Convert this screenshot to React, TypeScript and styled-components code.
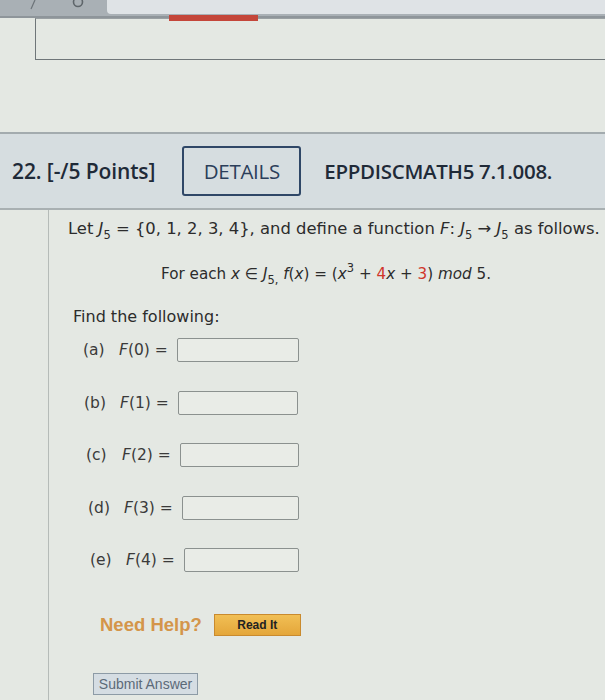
import styled, { createGlobalStyle } from "styled-components";

const GlobalStyle = createGlobalStyle`
  html, body {
    margin: 0;
    padding: 0;
    background: #e4e8e3;
  }
  * {
    box-sizing: border-box;
  }
`;

const Page = styled.div`
  width: 605px;
  height: 700px;
  overflow: hidden;
  background: #e4e8e3;
  font-family: "DejaVu Sans", Verdana, sans-serif;
  color: #333;
`;

const TopBar = styled.div`
  height: 18px;
  background: #a9b0b5;
  border-bottom: 2px solid #8e959a;
  display: flex;
  align-items: flex-start;
`;

const BarIcons = styled.div`
  width: 107px;
  display: flex;
  gap: 34px;
  padding: 0 0 0 28px;
`;

const TabArea = styled.div`
  flex: 1;
  height: 14px;
  background: #dfe3e6;
  border-bottom-left-radius: 4px;
`;

const PrevAnswer = styled.div`
  position: relative;
  margin: 0 0 0 35px;
  height: 42px;
  border-left: 1.5px solid #6f7679;
  border-bottom: 1.5px solid #6f7679;
  border-top: 1.5px solid #9aa0a3;
`;

const RedMark = styled.div`
  position: absolute;
  top: -4px;
  left: 133px;
  width: 89px;
  height: 6px;
  background: #c4463a;
`;

const Spacer = styled.div`
  height: 72px;
`;

const QuestionHeader = styled.div`
  height: 78px;
  background: #d6dde0;
  border-top: 2px solid #a3abae;
  border-bottom: 2px solid #a9b0b2;
  display: flex;
  align-items: center;
  padding: 0 0 0 12px;
  font-family: "Open Sans", "Noto Sans", sans-serif;
  color: #1f2a38;
`;

const Points = styled.span`
  font-size: 21px;
  font-weight: 600;
  letter-spacing: -0.1px;
`;

const DetailsButton = styled.div`
  margin-left: 27px;
  width: 119px;
  height: 50px;
  border: 2px solid #2f4767;
  border-radius: 3px;
  display: flex;
  align-items: center;
  justify-content: center;
  font-size: 20.5px;
  color: #2b3e5a;
  letter-spacing: -0.3px;
`;

const Source = styled.span`
  margin-left: 23px;
  font-size: 20.5px;
  font-weight: 600;
  letter-spacing: -0.3px;
`;

const Body = styled.div`
  margin-left: 48px;
  border-left: 1.5px solid #b5bbb8;
  padding: 8px 0 0 19px;
  height: 500px;
`;

const Statement = styled.div`
  font-size: 16.4px;
  color: #2c2c2c;
  white-space: nowrap;
  line-height: 22px;
`;

const Formula = styled(Statement)`
  margin: 22px 0 0 93px;
  font-size: 15.2px;
`;

const Var = styled.i`
  font-family: "DejaVu Sans", Verdana, sans-serif;
`;

const Small = styled.span<{ $up?: boolean }>`
  font-size: 11.5px;
  position: relative;
  top: ${(p) => (p.$up ? "-7px" : "5px")};
`;

const Red = styled.span`
  color: #d0352b;
`;

const Find = styled.div`
  margin: 21px 0 0 5px;
  font-size: 16px;
  color: #2c2c2c;
`;

const Parts = styled.div`
  display: flex;
  flex-direction: column;
  gap: 28.5px;
  margin: 12px 0 0 15px;
`;

const PartRow = styled.div<{ $shift: number }>`
  display: flex;
  align-items: center;
  padding-left: ${(p) => p.$shift}px;
  font-size: 15.5px;
  color: #3a3a3a;
  height: 24px;
`;

const PartLabel = styled.span`
  width: 36px;
`;

const PartExpr = styled.span`
  width: 58px;
  white-space: nowrap;
`;

const AnswerInput = styled.div<{ $width: number }>`
  width: ${(p) => p.$width}px;
  height: 24px;
  border: 1.5px solid #8b918f;
  border-radius: 2px;
  background: #e9ece7;
`;

const HelpRow = styled.div`
  display: flex;
  align-items: center;
  gap: 12px;
  margin: 42px 0 0 32px;
`;

const NeedHelp = styled.span`
  font-family: "Liberation Sans", Arial, sans-serif;
  font-weight: bold;
  font-size: 18.5px;
  color: #d4954a;
`;

const ReadIt = styled.div`
  width: 87px;
  height: 22px;
  border: 1.5px solid #c98a2e;
  background: linear-gradient(#f1bf55, #e4a63a);
  display: flex;
  align-items: center;
  justify-content: center;
  font-family: "Liberation Sans", Arial, sans-serif;
  font-weight: bold;
  font-size: 12px;
  color: #222;
`;

const SubmitButton = styled.div`
  margin: 37px 0 0 25px;
  width: 105px;
  height: 22px;
  border: 1.5px solid #8d9ba6;
  background: #d5dde3;
  display: flex;
  align-items: center;
  justify-content: center;
  font-family: "Liberation Sans", Arial, sans-serif;
  font-size: 14px;
  color: #5c6a78;
`;

const J5 = ({ comma }: { comma?: boolean }) => (
  <>
    <Var>J</Var>
    <Small>{comma ? "5," : "5"}</Small>
  </>
);

const parts = [
  { label: "(a)", arg: "0", shift: 0, width: 122 },
  { label: "(b)", arg: "1", shift: 1, width: 120 },
  { label: "(c)", arg: "2", shift: 3, width: 119 },
  { label: "(d)", arg: "3", shift: 5, width: 117 },
  { label: "(e)", arg: "4", shift: 7, width: 115 },
];

export default function App() {
  return (
    <Page>
      <GlobalStyle />
      <TopBar>
        <BarIcons>
          <svg width="10" height="10" viewBox="0 0 10 10">
            <path d="M3 9 L7 0" stroke="#6c7378" strokeWidth="1.2" fill="none" />
          </svg>
          <svg width="12" height="10" viewBox="0 0 12 10">
            <circle cx="6" cy="2" r="4.5" stroke="#5f666b" strokeWidth="1.6" fill="none" />
          </svg>
        </BarIcons>
        <TabArea />
      </TopBar>
      <PrevAnswer>
        <RedMark />
      </PrevAnswer>
      <Spacer />
      <QuestionHeader>
        <Points>22. [-/5 Points]</Points>
        <DetailsButton>DETAILS</DetailsButton>
        <Source>EPPDISCMATH5 7.1.008.</Source>
      </QuestionHeader>
      <Body>
        <Statement>
          Let <J5 /> = {"{"}0, 1, 2, 3, 4{"}"}, and define a function <Var>F</Var>: <J5 /> → <J5 /> as
          follows.
        </Statement>
        <Formula>
          For each <Var>x</Var> ∈ <J5 comma /> <Var>f</Var>(<Var>x</Var>) = (<Var>x</Var>
          <Small $up>3</Small> + <Red>4</Red>
          <Var>x</Var> + <Red>3</Red>) <Var>mod</Var> 5.
        </Formula>
        <Find>Find the following:</Find>
        <Parts>
          {parts.map((p) => (
            <PartRow key={p.label} $shift={p.shift}>
              <PartLabel>{p.label}</PartLabel>
              <PartExpr>
                <Var>F</Var>({p.arg}) =
              </PartExpr>
              <AnswerInput $width={p.width} />
            </PartRow>
          ))}
        </Parts>
        <HelpRow>
          <NeedHelp>Need Help?</NeedHelp>
          <ReadIt>Read It</ReadIt>
        </HelpRow>
        <SubmitButton>Submit Answer</SubmitButton>
      </Body>
    </Page>
  );
}
